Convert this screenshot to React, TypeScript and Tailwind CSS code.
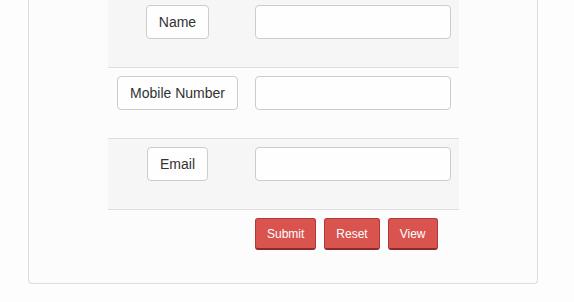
import React from "react";

const fields = [
    { label: "Name", striped: true, first: true },
    { label: "Mobile Number", striped: false, first: false },
    { label: "Email", striped: true, first: false },
];

const actions = ["Submit", "Reset", "View"];

const App = () => {
    return (
        <div
            className="w-[574px] h-[302px] overflow-hidden bg-[#fcfdfc]"
            style={{ fontFamily: '"Liberation Sans", Arial, sans-serif' }}
        >
            <div className="ml-[28px] w-[510px] border-x border-b border-[#dcdddc] rounded-b-[4px] bg-[#fbfcfb]">
                <div className="ml-[79px] w-[351px]">
                    {fields.map((f) => (
                        <div
                            key={f.label}
                            className={`flex border-b border-[#dddedd] ${f.striped ? "bg-[#f5f6f5]" : ""} ${f.first ? "pt-[5px]" : "pt-2"} pb-[28px]`}
                        >
                            <div className="w-[139px] shrink-0 flex justify-center">
                                <span className="h-[34px] px-3 flex items-center border border-[#cccccc] rounded-[4px] bg-[#fdfefd] text-[14px] text-[#333333]">
                                    {f.label}
                                </span>
                            </div>
                            <div className="flex-1 px-2">
                                <input
                                    type="text"
                                    className="block w-full h-[34px] border border-[#cccccc] rounded-[4px] bg-[#fdfefd] outline-none"
                                />
                            </div>
                        </div>
                    ))}
                    <div className="flex gap-2 pl-[147px] pt-2 pb-[33px]">
                        {actions.map((a) => (
                            <button
                                key={a}
                                className="h-[32px] px-[11px] text-[12px] text-white bg-[#d9534f] border border-[#b03a36] border-b-2 border-b-[#8e2b28] rounded-[3px]"
                            >
                                {a}
                            </button>
                        ))}
                    </div>
                </div>
            </div>
        </div>
    );
};

export default App;
